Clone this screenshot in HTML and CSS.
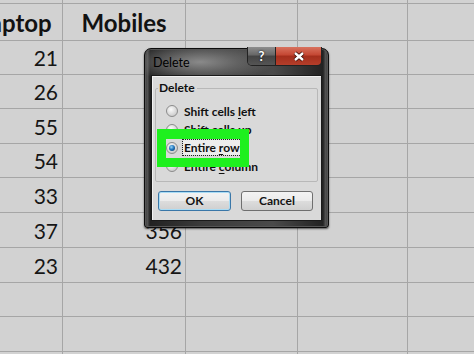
FILE: index.html
```html
<!DOCTYPE html>
<html>
<head>
<meta charset="utf-8">
<link rel="stylesheet" href="styles.css">
</head>
<body>
<div class="sheet">
  <div class="c"></div><div class="c"></div><div class="c"></div><div class="c"></div><div class="c"></div>
  <div class="c h first">Laptop</div><div class="c h">Mobiles</div><div class="c"></div><div class="c"></div><div class="c"></div>
  <div class="c n">21</div><div class="c"></div><div class="c"></div><div class="c"></div><div class="c"></div>
  <div class="c n">26</div><div class="c"></div><div class="c"></div><div class="c"></div><div class="c"></div>
  <div class="c n">55</div><div class="c"></div><div class="c"></div><div class="c"></div><div class="c"></div>
  <div class="c n">54</div><div class="c"></div><div class="c"></div><div class="c"></div><div class="c"></div>
  <div class="c n">33</div><div class="c"></div><div class="c"></div><div class="c"></div><div class="c"></div>
  <div class="c n">37</div><div class="c n b">356</div><div class="c"></div><div class="c"></div><div class="c"></div>
  <div class="c n">23</div><div class="c n b">432</div><div class="c"></div><div class="c"></div><div class="c"></div>
  <div class="c"></div><div class="c"></div><div class="c"></div><div class="c"></div><div class="c"></div>
  <div class="c"></div><div class="c"></div><div class="c"></div><div class="c"></div><div class="c"></div>
  <div class="c"></div><div class="c"></div><div class="c"></div><div class="c"></div><div class="c"></div>
</div>

<div class="dialog">
  <div class="titlebar"><span class="title">Delete</span></div>
  <div class="capbtns">
    <span class="help">?</span>
    <span class="close"><svg width="14" height="11" viewBox="0 0 14 11"><path d="M3 2 L11 9 M11 2 L3 9" stroke="#3b0d06" stroke-width="4.2" fill="none"/><path d="M3 2 L11 9 M11 2 L3 9" stroke="#ffffff" stroke-width="2.4" fill="none"/></svg></span>
  </div>
  <div class="client">
    <fieldset class="group">
      <legend>Delete</legend>
      <div class="opt"><span class="radio"></span><span class="lbl">Shift cells <u>l</u>eft</span></div>
      <div class="opt"><span class="radio"></span><span class="lbl">Shift cells <u>u</u>p</span></div>
      <div class="opt sel"><span class="radio on"></span><span class="lbl focus">Entire <u>r</u>ow</span></div>
      <div class="opt"><span class="radio"></span><span class="lbl">Entire <u>c</u>olumn</span></div>
    </fieldset>
    <div class="btns">
      <span class="btn ok">OK</span>
      <span class="btn">Cancel</span>
    </div>
  </div>
</div>

<div class="highlight"></div>
</body>
</html>
```

FILE: styles.css
```css
html, body {
  margin: 0;
  padding: 0;
}
body {
  width: 474px;
  height: 354px;
  overflow: hidden;
  position: relative;
  background: #d2d2d2;
  font-family: Lato, "Liberation Sans", sans-serif;
}

/* spreadsheet */
.sheet {
  display: grid;
  grid-template-columns: 101px 123px 112px 110px 67px;
  grid-template-rows: 4px 37px 34px 34px 35px 34px 35px 35px 35px 34px 35px 3px;
  margin-left: -38px;
  width: max-content;
}
.c {
  box-sizing: border-box;
  border-right: 1px solid #a6a6a6;
  border-bottom: 1px solid #a6a6a6;
  display: flex;
  align-items: center;
  color: #161616;
  overflow: hidden;
  white-space: nowrap;
}
.h {
  justify-content: center;
  font-weight: 700;
  font-size: 24px;
  padding-top: 1px;
  color: #121212;
}
.h.first {
  padding-left: 5px;
}
.n {
  justify-content: flex-end;
  font-size: 21px;
  padding-right: 4px;
}
.n.b {
  padding-right: 3px;
}

/* dialog */
.dialog {
  position: absolute;
  left: 144px;
  top: 48px;
  width: 185px;
  height: 180px;
  box-sizing: border-box;
  border: 1px solid #0d0d0d;
  border-radius: 7px 7px 3px 3px;
  padding: 0 6px 6px;
  display: flex;
  flex-direction: column;
  background:
    radial-gradient(ellipse 75px 20px at 55px 13px, #8a8a8a 0%, rgba(120,120,120,0.6) 50%, rgba(60,60,60,0) 100%),
    linear-gradient(90deg, #141414 0, #5a5a5a 2px, #222 5px, #3a3a3a 30%, #4a4a4a 70%, #222 calc(100% - 5px), #5a5a5a calc(100% - 2px), #141414 100%);
  box-shadow: inset 0 0 0 1px #555, 0 1px 2px rgba(0,0,0,0.6);
}
.titlebar {
  height: 26px;
  display: flex;
  align-items: center;
  padding-left: 2px;
}
.title {
  font-size: 12.5px;
  color: #000;
}
.capbtns {
  position: absolute;
  right: 6px;
  top: -2px;
  width: 75px;
  height: 19px;
  display: flex;
  border: 1px solid #222;
  border-top: none;
  border-radius: 0 0 5px 5px;
  overflow: hidden;
  box-sizing: border-box;
}
.help {
  width: 27px;
  display: flex;
  align-items: center;
  justify-content: center;
  color: #fff;
  font-weight: 700;
  font-size: 13px;
  background: linear-gradient(#8e8e8e, #666 45%, #444 50%, #555);
  border-right: 1px solid #222;
  text-shadow: 0 0 2px #000;
}
.close {
  flex: 1;
  display: flex;
  align-items: center;
  justify-content: center;
  background: linear-gradient(#d8725e, #c44632 45%, #a42e1c 50%, #b43e2a);
}
.client {
  flex: 1;
  box-sizing: border-box;
  border: 1px solid #1a1a1a;
  background: #d9d9d9;
  box-shadow: inset 1px 1px 0 #f2f2f2;
  display: flex;
  flex-direction: column;
}
.group {
  margin: 5px 3px 0;
  padding: 7px 0 5px;
  border: 1px solid #b8b8b8;
  border-radius: 2px;
  min-inline-size: 0;
}
legend {
  margin-left: 2px;
  padding: 0 2px 0 1px;
  font-size: 12px;
  line-height: 14px;
  color: #101010;
  font-weight: 700;
}
.opt {
  height: 18.4px;
  display: flex;
  align-items: center;
  padding-left: 10px;
  gap: 6px;
  font-size: 12px;
  font-weight: 700;
  color: #111;
}
.radio {
  width: 12px;
  height: 12px;
  box-sizing: border-box;
  border-radius: 50%;
  border: 1px solid #8c8c8c;
  background: radial-gradient(circle at 40% 35%, #fafafa, #d6d6d6 60%, #bdbdbd);
  display: flex;
  align-items: center;
  justify-content: center;
}
.radio.on::after {
  content: "";
  width: 6px;
  height: 6px;
  border-radius: 50%;
  background: radial-gradient(circle at 40% 35%, #9ad6f6, #2378c0 45%, #0a2c52);
}
.lbl u {
  text-decoration-thickness: 1px;
  text-underline-offset: 2px;
}
.focus {
  outline: 1px dotted #222;
  outline-offset: 0;
  background: #ededed;
  padding: 0 1px;
  margin-left: -1px;
}
.btns {
  display: flex;
  gap: 10px;
  padding: 9px 0 0 6px;
}
.btn {
  box-sizing: border-box;
  width: 72px;
  height: 20px;
  border: 1px solid #6f6f6f;
  border-radius: 3px;
  background: linear-gradient(#f3f3f3, #ebebeb 48%, #dcdcdc 52%, #cfcfcf);
  display: flex;
  align-items: center;
  justify-content: center;
  font-size: 12px;
  font-weight: 700;
  color: #141414;
}
.btn.ok {
  width: 73px;
  border-color: #3a77a8;
  box-shadow: inset 0 0 0 1px #a9dcf5;
}

/* wikiHow-style highlight */
.highlight {
  position: absolute;
  left: 157px;
  top: 129px;
  width: 92px;
  height: 38px;
  box-sizing: border-box;
  border: solid #1ef01e;
  border-width: 10px 9px 9px 9px;
}
```
